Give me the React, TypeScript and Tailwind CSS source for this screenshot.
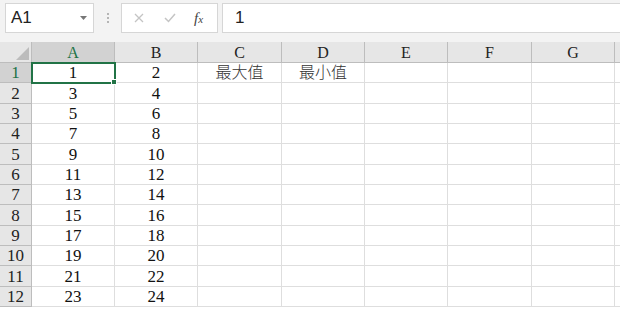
import React from "react";

const cols = ["A", "B", "C", "D", "E", "F", "G"];
const widths = ["w-[83px]", "w-[83px]", "w-[84px]", "w-[83px]", "w-[83px]", "w-[84px]", "w-[83px]"];

const rows: string[][] = [
  ["1", "2", "最大值", "最小值"],
  ["3", "4"],
  ["5", "6"],
  ["7", "8"],
  ["9", "10"],
  ["11", "12"],
  ["13", "14"],
  ["15", "16"],
  ["17", "18"],
  ["19", "20"],
  ["21", "22"],
  ["23", "24"],
];

const serif = "font-['Liberation_Serif','Noto_Sans_CJK_SC',serif]";

function Toolbar() {
  return (
    <div className="h-[42px] bg-[#f3f3f3] flex items-start pt-[3px] pl-[5px] gap-0 font-['Liberation_Sans',Arial,sans-serif]">
      {/* Name box */}
      <div className="w-[89px] h-[30px] bg-white border border-[#d6d6d6] flex items-center justify-between pl-[5px] pr-[6px]">
        <span className="text-[17px] text-[#222]">A1</span>
        <svg width="7" height="4" viewBox="0 0 7 4">
          <path d="M0 0 L7 0 L3.5 4 Z" fill="#777" />
        </svg>
      </div>
      {/* separator dots */}
      <div className="w-[27px] h-[30px] flex flex-col items-center justify-center gap-[2px]">
        <span className="w-[2px] h-[2px] bg-[#b5b5b5]" />
        <span className="w-[2px] h-[2px] bg-[#b5b5b5]" />
        <span className="w-[2px] h-[2px] bg-[#b5b5b5]" />
      </div>
      {/* buttons */}
      <div className="w-[97px] h-[30px] bg-white border border-[#d6d6d6] flex items-center">
        <svg className="ml-[12px]" width="10" height="10" viewBox="0 0 10 10">
          <path d="M1 1 L9 9 M9 1 L1 9" stroke="#c4c4c4" strokeWidth="1.3" />
        </svg>
        <svg className="ml-[20px]" width="12" height="10" viewBox="0 0 12 10">
          <path d="M1 5 L4.5 8.5 L11 1" stroke="#c4c4c4" strokeWidth="1.5" fill="none" />
        </svg>
        <span className="ml-[18px] text-[15px] italic text-[#444] font-['Liberation_Serif',serif] leading-none">
          f<span className="text-[11px]">x</span>
        </span>
      </div>
      {/* formula input */}
      <div className="ml-[4px] flex-1 h-[30px] bg-white border border-[#d6d6d6] border-r-0 flex items-center pl-[12px]">
        <span className="text-[17px] text-[#222]">1</span>
      </div>
    </div>
  );
}

function HeaderRow() {
  return (
    <div className={`flex h-[21px] ${serif}`}>
      <div className="w-[32px] h-full bg-[#e6e6e6] border-b border-r border-[#bdbdbd] flex items-end justify-end">
        <svg width="13" height="13" viewBox="0 0 13 13" className="mb-[2px] mr-[2px]">
          <path d="M13 0 L13 13 L0 13 Z" fill="#bcbcbc" />
        </svg>
      </div>
      {cols.map((c, i) => (
        <div
          key={c}
          className={`${widths[i]} h-full shrink-0 border-r border-b flex items-end justify-center pb-[1px] text-[16px] leading-none ${
            i === 0
              ? "bg-[#d2d2d2] text-[#217346] border-r-[#bdbdbd] border-b-[#9e9e9e]"
              : "bg-[#e6e6e6] text-[#222] border-[#bdbdbd]"
          }`}
        >
          {c}
        </div>
      ))}
      <div className="flex-1 bg-[#e6e6e6] border-b border-[#bdbdbd]" />
    </div>
  );
}

function DataRow({ n, vals }: { n: number; vals: string[] }) {
  return (
    <div className={`flex h-[20.33px] ${serif}`}>
      <div
        className={`w-[32px] h-full shrink-0 border-r border-b border-[#bdbdbd] flex items-end justify-center pb-[1px] text-[17px] leading-none ${
          n === 1 ? "bg-[#d2d2d2] text-[#217346]" : "bg-[#e6e6e6] text-[#222]"
        }`}
      >
        {n}
      </div>
      {cols.map((c, i) => (
        <div
          key={c}
          className={`${widths[i]} h-full shrink-0 border-r border-b border-[#dedede] flex items-end justify-center pb-[1px] leading-none ${
            n === 1 && i === 0 ? "relative" : ""
          } ${i >= 2 ? "text-[16px] font-light text-[#333]" : "text-[17px] text-[#111]"}`}
        >
          {vals[i] ?? ""}
          {n === 1 && i === 0 && (
            <>
              <div className="absolute -left-[1px] -top-[1px] w-[85px] h-[22px] border-2 border-[#217346]" />
              <div className="absolute -right-[3px] -bottom-[3px] w-[6px] h-[6px] bg-[#217346] border border-white" />
            </>
          )}
        </div>
      ))}
      <div className="flex-1 border-b border-[#dedede]" />
    </div>
  );
}

export default function App() {
  return (
    <div className="w-[620px] h-[309px] overflow-hidden bg-white">
      <Toolbar />
      <HeaderRow />
      {rows.map((vals, i) => (
        <DataRow key={i} n={i + 1} vals={vals} />
      ))}
    </div>
  );
}
